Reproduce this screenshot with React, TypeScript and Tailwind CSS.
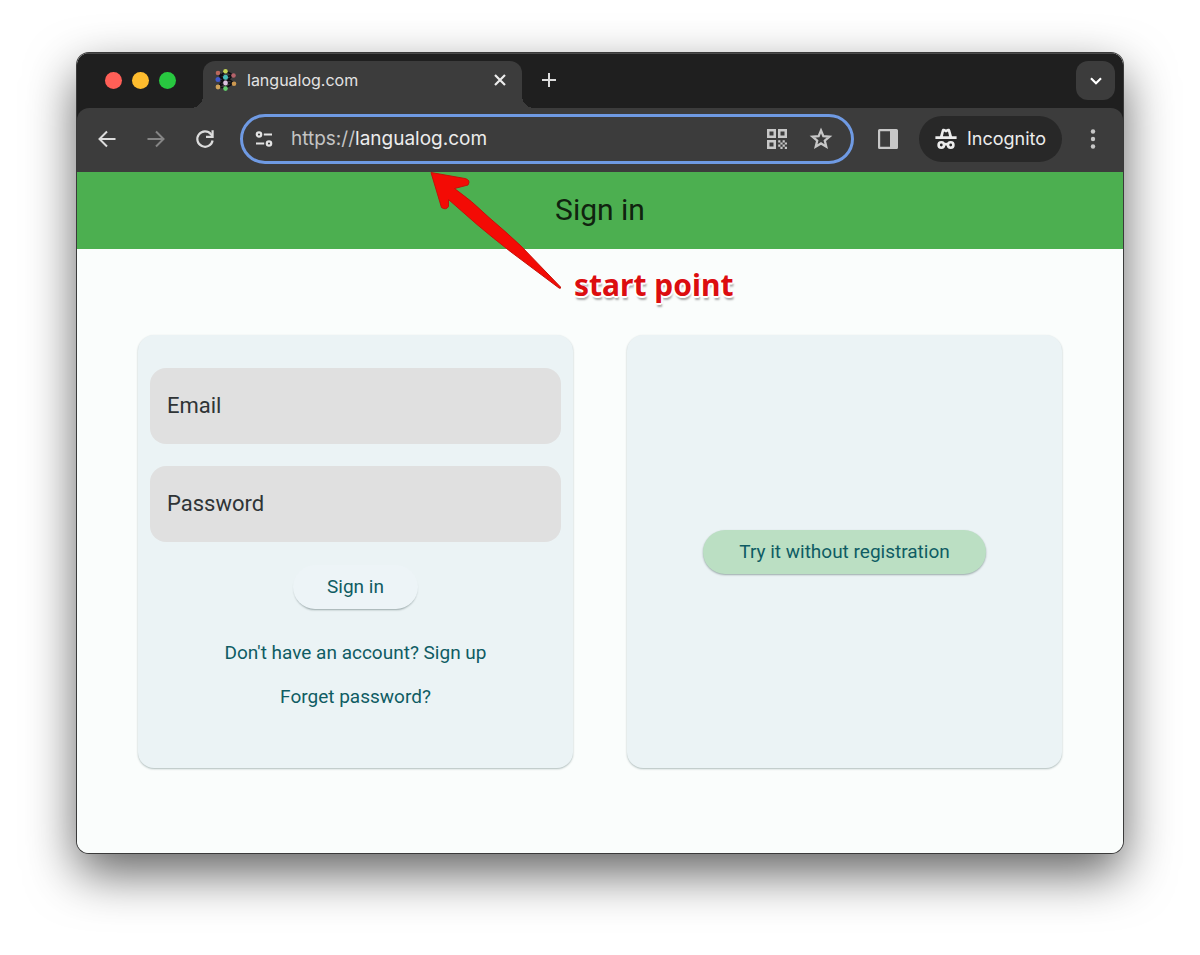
import React from 'react';

const actionText = "font-['Roboto',sans-serif] text-[19px] leading-6 text-[#0f5c63]";

function Favicon() {
  return (
    <svg viewBox="0 0 22 22" className="size-[22px] shrink-0" aria-hidden="true">
      <path
        d="M3 4 10.500 8 18 6M3 10 10.500 2 18 6M3 10 10.500 8 19 14M3 10 10.500 14 19 14M3 18 10.500 14 18 6M3 18 10.500 19 19 14M3 4 10.500 14M3 18 10.500 8"
        stroke="#0c0c12"
        strokeWidth="1.500"
        fill="none"
      />
      <circle cx="3" cy="4" r="2.300" fill="#b9685c" />
      <circle cx="10.500" cy="2.300" r="2.300" fill="#c3d455" />
      <circle cx="18.500" cy="6.500" r="2.300" fill="#b4626a" />
      <circle cx="3" cy="10.500" r="2.500" fill="#4059cc" />
      <circle cx="10.500" cy="8.200" r="2.500" fill="#45bcb9" />
      <circle cx="10.500" cy="14" r="2.400" fill="#dcc2e0" />
      <circle cx="3" cy="18" r="2.400" fill="#d0a35a" />
      <circle cx="19" cy="14.800" r="2.300" fill="#cc9850" />
      <circle cx="10.500" cy="19.600" r="2.300" fill="#62cc6c" />
    </svg>
  );
}

function BackIcon() {
  return (
    <svg viewBox="0 0 20 20" className="size-5" fill="none" stroke="currentColor" strokeWidth="2" aria-hidden="true">
      <path d="M18.500 10H3M10 2.500 2.500 10l7.500 7.500" />
    </svg>
  );
}

function ForwardIcon() {
  return (
    <svg viewBox="0 0 20 20" className="size-5" fill="none" stroke="currentColor" strokeWidth="2" aria-hidden="true">
      <path d="M1.500 10H17M10 2.500l7.500 7.500-7.500 7.500" />
    </svg>
  );
}

function ReloadIcon() {
  return (
    <svg viewBox="0 0 20 20" className="size-5" fill="none" stroke="currentColor" strokeWidth="2.200" aria-hidden="true">
      <path d="M17.600 11.500A7.700 7.700 0 1 1 16 5.200L17.300 6.700" />
      <path d="M17.600 1.300v6.600h-6.600" />
    </svg>
  );
}

function TuneIcon() {
  return (
    <svg viewBox="0 0 18 18" className="size-[18px]" fill="none" stroke="currentColor" strokeWidth="2.200" aria-hidden="true">
      <circle cx="4" cy="4.500" r="2.200" />
      <path d="M8.800 4.500H17M1 13.500h8.200" />
      <circle cx="14" cy="13.500" r="2.200" />
    </svg>
  );
}

function QrIcon() {
  return (
    <svg viewBox="0 0 20 20" className="size-5" aria-hidden="true">
      <g fill="none" stroke="currentColor" strokeWidth="2.500">
        <path d="M1.250 1.250h6.500v6.500h-6.500zM12.250 1.250h6.500v6.500h-6.500zM1.250 12.250h6.500v6.500h-6.500z" />
      </g>
      <path
        fill="currentColor"
        d="M11.200 11.200h2.200v2.200h-2.200zM15.600 11.200h2.200v2.200h-2.200zM13.400 13.400h2.200v2.200h-2.200zM17.800 13.400H20v2.200h-2.200zM11.200 15.600h2.200v2.200h-2.200zM15.600 15.600h2.200v2.200h-2.200zM13.400 17.800h2.200V20h-2.200zM17.800 17.800H20V20h-2.200z"
      />
    </svg>
  );
}

function StarIcon() {
  return (
    <svg viewBox="0 0 24 24" className="size-6" fill="none" stroke="currentColor" strokeWidth="2.300" aria-hidden="true">
      <path d="m12 3.400 2.350 5.700 6.150.5-4.700 4.050 1.450 6L12 16.450l-5.250 3.200 1.450-6L3.500 9.600l6.150-.5z" />
    </svg>
  );
}

function SidePanelIcon() {
  return (
    <svg viewBox="0 0 20 20" className="size-5" aria-hidden="true">
      <path
        fill="currentColor"
        fillRule="evenodd"
        d="M1.500 0h17A1.500 1.500 0 0 1 20 1.500v17a1.500 1.500 0 0 1-1.500 1.500h-17A1.500 1.500 0 0 1 0 18.500v-17A1.500 1.500 0 0 1 1.500 0zm.7 2.200v15.600h9.800V2.200z"
      />
    </svg>
  );
}

function IncognitoIcon() {
  return (
    <svg viewBox="0 0 22 22" className="size-[22px]" aria-hidden="true">
      <path
        fill="currentColor"
        fillRule="evenodd"
        d="M6.800 2C7.200.8 8 .5 9 .8l2 .7 2-.7c1-.3 1.800 0 2.200 1.200L17 8.300H21.600v2.700H.4V8.300H5zM9 3.600 7.900 8.300h6.200L13 3.600l-2 .8z"
      />
      <g fill="none" stroke="currentColor" strokeWidth="2.600">
        <circle cx="6.300" cy="17" r="2.700" />
        <circle cx="15.700" cy="17" r="2.700" />
        <path d="M8.800 16.600q2.200-1 4.400 0" />
      </g>
    </svg>
  );
}

function TabStrip() {
  return (
    <div className="flex h-[55px] items-end bg-[#1f1f1f] pr-2 pl-[28px] shadow-[inset_0_1px_0_#4a4a4a]">
      <div className="flex h-[55px] w-[98px] shrink-0 items-center gap-[10px]">
        <button aria-label="Close window" className="size-[17px] rounded-full bg-[#ff5f57]" />
        <button aria-label="Minimize window" className="size-[17px] rounded-full bg-[#febc2e]" />
        <button aria-label="Zoom window" className="size-[17px] rounded-full bg-[#28c840]" />
      </div>
      <div className="relative flex h-[47px] w-[319px] min-w-0 items-center rounded-t-xl bg-[#3c3c3c] pr-3 pb-[9px] pl-3 before:absolute before:bottom-0 before:-left-3 before:size-3 before:bg-[radial-gradient(circle_at_0_0,transparent_12px,#3c3c3c_12px)] after:absolute after:-right-3 after:bottom-0 after:size-3 after:bg-[radial-gradient(circle_at_100%_0,transparent_12px,#3c3c3c_12px)]">
        <Favicon />
        <span className="ml-[10px] flex-1 truncate text-[16px] leading-6 text-[#e3e3e3]">langualog.com</span>
        <button aria-label="Close tab" className="flex size-5 items-center justify-center text-[#ececec]">
          <svg viewBox="0 0 12 12" className="size-3" stroke="currentColor" strokeWidth="2.200" aria-hidden="true">
            <path d="M1 1l10 10M11 1 1 11" />
          </svg>
        </button>
      </div>
      <button aria-label="New tab" className="mb-[18px] ml-[17px] flex size-5 shrink-0 items-center justify-center text-[#dcdcdc]">
        <svg viewBox="0 0 16 16" className="size-4" stroke="currentColor" strokeWidth="2" aria-hidden="true">
          <path d="M8 1v14M1 8h14" />
        </svg>
      </button>
      <button
        aria-label="Search tabs"
        className="mb-2 ml-auto flex size-[39px] shrink-0 items-center justify-center rounded-xl bg-[#3c3c3c] text-white"
      >
        <svg viewBox="0 0 12 8" className="h-2 w-3" fill="none" stroke="currentColor" strokeWidth="2.200" aria-hidden="true">
          <path d="M1 1.200l5 5 5-5" />
        </svg>
      </button>
    </div>
  );
}

function Toolbar() {
  return (
    <div className="bg-[#1f1f1f]">
      <div className="flex h-16 items-center rounded-t-xl bg-[#3c3c3c] pr-5 pb-0.5 pl-5 text-[#c7c7c7]">
        <div className="flex shrink-0 gap-[29px]">
          <button aria-label="Back" className="text-[#dcdcdc]"><BackIcon /></button>
          <button aria-label="Forward" className="text-[#858585]"><ForwardIcon /></button>
          <button aria-label="Reload" className="text-[#dcdcdc]"><ReloadIcon /></button>
        </div>
        <div className="ml-[25px] flex h-[50px] min-w-0 flex-1 items-center rounded-full border-[3px] border-[#6f9ae3] pr-[18px] pl-3 text-[19px] leading-7">
          <button aria-label="View site information" className="text-[#e3e3e3]"><TuneIcon /></button>
          <label htmlFor="address" className="ml-[18px] text-[#c4c4c4]">https://</label>
          <input
            id="address"
            type="text"
            defaultValue="langualog.com"
            className="min-w-0 flex-1 bg-transparent text-[#ececec] outline-none"
          />
          <button aria-label="Create QR code"><QrIcon /></button>
          <button aria-label="Bookmark this tab" className="ml-[22px]"><StarIcon /></button>
        </div>
        <button aria-label="Side panel" className="ml-6 shrink-0"><SidePanelIcon /></button>
        <button className="ml-[21px] flex h-[46px] shrink-0 items-center gap-[10px] rounded-full bg-[#282828] px-4 text-[18px] leading-6 text-[#ececec]">
          <IncognitoIcon />
          <span>Incognito</span>
        </button>
        <button aria-label="Menu" className="ml-[21px] shrink-0">
          <svg viewBox="0 0 20 20" className="size-5" fill="currentColor" aria-hidden="true">
            <circle cx="10" cy="2.500" r="2.200" />
            <circle cx="10" cy="10" r="2.200" />
            <circle cx="10" cy="17.500" r="2.200" />
          </svg>
        </button>
      </div>
    </div>
  );
}

function Field({ id, label, type }: { id: string; label: string; type: string }) {
  return (
    <div className="flex h-[76px] w-full items-center rounded-2xl bg-[#e0e0e0] px-[17px] font-['Roboto',sans-serif] text-[22px] leading-7 text-[#2f3436]">
      <label htmlFor={id}>{label}</label>
      <input id={id} type={type} className="ml-3 min-w-0 flex-1 bg-transparent outline-none" />
    </div>
  );
}

const cardStyle = 'flex flex-col items-center rounded-2xl bg-[#ebf3f5] shadow-[0_1px_2px_rgba(0,40,40,0.3)]';

function Annotation() {
  return (
    <div className="pointer-events-none absolute top-[118px] left-[352px] flex items-start">
      <svg viewBox="0 0 134 120" className="h-[120px] w-[134px]" aria-hidden="true">
        <path
          d="M2 1.500 36 7.500Q42 9 39 14L25.500 17.500Q42 29 60 46.500 76 60 92 75L131.500 116Q132 118 130 117L82 81Q64 67 48 53.500L19.500 28.500 19.500 35.500Q17 39.500 12.500 36.500z"
          fill="#f30b05"
          stroke="#c41208"
          strokeWidth="1"
          strokeLinejoin="round"
        />
      </svg>
      <span className="mt-24 ml-[11px] font-['Noto_Sans',sans-serif] text-[30px] leading-9 font-bold whitespace-nowrap text-[#dc0d10] [text-shadow:0_0_2px_#fff,2px_1px_1px_#fff,-2px_1px_1px_#fff,0_2px_0_#fff,1px_4px_2px_#a8a8a8]">
        start point
      </span>
    </div>
  );
}

export default function App() {
  return (
    <div className="min-h-screen bg-white px-[77px] pt-[53px] pb-[102px] font-['Inter',sans-serif]">
      <div className="relative rounded-xl shadow-[0_0_0_1px_#3a3a3a,0_20px_50px_rgba(0,0,0,0.62)]">
        <div className="overflow-hidden rounded-xl bg-[#fafdfc]">
          <TabStrip />
          <Toolbar />
          <header className="flex h-[77px] items-center justify-center bg-[#4caf50] pb-0.5">
            <h1 className="font-['Roboto',sans-serif] text-[30px] leading-9 text-[#10230f]">Sign in</h1>
          </header>
          <main className="grid gap-[54px] px-[61px] pt-[86px] pb-[85px] md:grid-cols-2">
            <form className={`${cardStyle} px-3 pt-[33px] pb-[49px]`} onSubmit={(e: React.FormEvent) => e.preventDefault()}>
              <div className="flex w-full flex-col gap-[22px]">
                <Field id="email" label="Email" type="email" />
                <Field id="password" label="Password" type="password" />
              </div>
              <button
                type="submit"
                className={`${actionText} mt-[23px] h-11 rounded-full bg-[#edf4f7] px-[34px] shadow-[0_2px_2px_-1px_rgba(0,30,30,0.35)]`}
              >
                Sign in
              </button>
              <a href="#sign-up" className={`${actionText} mt-[22px] py-[10px]`}>Don't have an account? Sign up</a>
              <a href="#reset" className={`${actionText} py-[10px]`}>Forget password?</a>
            </form>
            <section className={`${cardStyle} justify-center px-3 py-[33px]`}>
              <button className={`${actionText} h-11 rounded-full bg-[#bbdfc3] px-9 shadow-[0_1px_2px_rgba(0,30,30,0.35)]`}>
                Try it without registration
              </button>
            </section>
          </main>
        </div>
        <Annotation />
      </div>
    </div>
  );
}
